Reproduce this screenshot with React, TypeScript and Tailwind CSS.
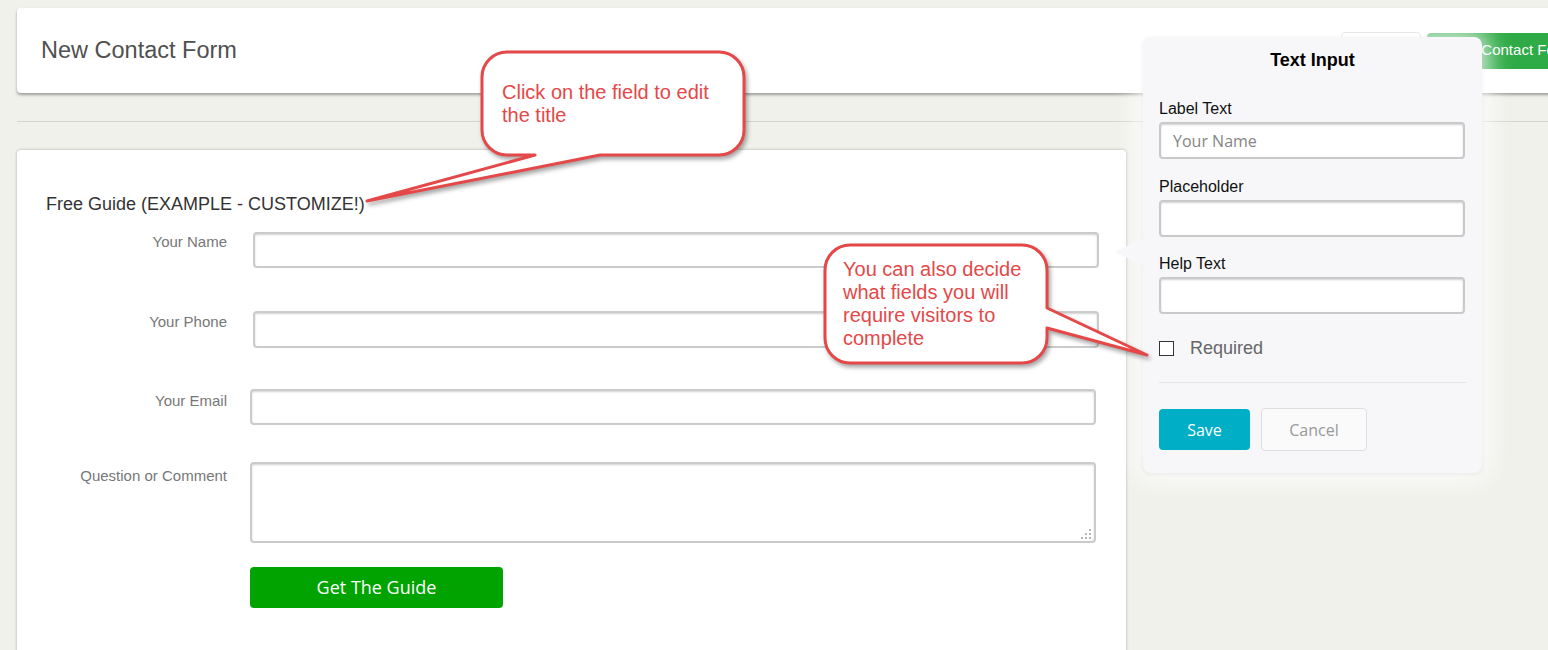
import React from 'react';

const rows = [
  { label: 'Your Name', mt: 'mt-[17px]', ml: 'ml-[26px]', h: 'h-[36px]', pt: 'pt-[1px]' },
  { label: 'Your Phone', mt: 'mt-[43px]', ml: 'ml-[26px]', h: 'h-[37px]', pt: 'pt-[2px]' },
  { label: 'Your Email', mt: 'mt-[41px]', ml: 'ml-[23px]', h: 'h-[36px]', pt: 'pt-[3px]' },
];

const inputCls =
  'w-[846px] rounded-[4px] border-2 border-[#cbcbcb] bg-white shadow-[inset_0_1px_2px_rgba(0,0,0,0.18)] outline-none';

const popInputCls =
  'w-[306px] h-[37px] rounded-[4px] border-2 border-[#c9c9c9] bg-white px-[12px] text-[16px] text-[#777] shadow-[inset_0_1px_2px_rgba(0,0,0,0.18)] outline-none placeholder:text-[#858585]';

const App: React.FC = () => {
  return (
    <div className="relative w-[1548px] h-[650px] overflow-hidden bg-[#f1f1ec] font-['Liberation_Sans',Arial,sans-serif]">
      <div className="pt-[8px] pl-[17px]">
        {/* Header */}
        <div className="flex items-center w-[1560px] h-[85px] rounded-[4px] bg-white shadow-[0_2px_3px_rgba(0,0,0,0.35)]">
          <h1 className="pl-[24px] text-[23.5px] text-[#505050]">New Contact Form</h1>
          <div className="ml-auto flex items-center gap-[6px]">
            <button className="w-[80px] h-[37px] rounded-[4px] border border-[#cfcfcf] bg-white"></button>
            <button className="w-[150px] h-[36px] rounded-l-[4px] bg-[#2eaa46] pl-[16px] text-left text-[15px] text-white whitespace-nowrap">
              Save Contact Form
            </button>
          </div>
        </div>

        <div className="mt-[28px] h-px w-full bg-[#d5d5cf]"></div>

        {/* Form card */}
        <div className="mt-[28px] w-[1109px] h-[520px] rounded-[4px] bg-white pt-[43px] pl-[29px] shadow-[0_0_3px_rgba(0,0,0,0.3)]">
          <h2 className="text-[18px] leading-[22px] text-[#333]">Free Guide (EXAMPLE - CUSTOMIZE!)</h2>

          {rows.map((row) => (
            <div key={row.label} className={`flex ${row.mt}`}>
              <label className={`w-[181px] text-right text-[15px] leading-[18px] text-[#777] ${row.pt}`}>
                {row.label}
              </label>
              <input className={`${inputCls} ${row.h} ${row.ml}`} />
            </div>
          ))}

          <div className="flex mt-[37px]">
            <label className="w-[181px] pt-[5px] text-right text-[15px] leading-[18px] text-[#777]">
              Question or Comment
            </label>
            <div className="relative ml-[23px]">
              <textarea className={`${inputCls} h-[81px] resize-none block`} />
              <svg className="absolute right-[4px] bottom-[3px]" width="12" height="12" viewBox="0 0 12 12">
                <rect x="9" y="1" width="2" height="2" fill="#b5b5b5" />
                <rect x="5" y="5" width="2" height="2" fill="#b5b5b5" />
                <rect x="9" y="5" width="2" height="2" fill="#b5b5b5" />
                <rect x="1" y="9" width="2" height="2" fill="#b5b5b5" />
                <rect x="5" y="9" width="2" height="2" fill="#b5b5b5" />
                <rect x="9" y="9" width="2" height="2" fill="#b5b5b5" />
              </svg>
            </div>
          </div>

          <div className="flex mt-[24px]">
            <div className="w-[181px]"></div>
            <button className="ml-[23px] w-[253px] h-[41px] rounded-[4px] bg-[#00a300] font-['Open_Sans',sans-serif] text-[18px] text-white">
              Get The Guide
            </button>
          </div>
        </div>
      </div>

      {/* Field settings popover */}
      <div className="absolute left-[1143px] top-[37px] w-[339px] h-[436px] rounded-[8px] bg-[#f7f7f9] px-[16px] pt-[11px] shadow-[0_0_24px_6px_rgba(255,255,255,0.85),0_1px_4px_rgba(0,0,0,0.14)]">
        <div className="absolute -left-[28px] top-[201px] w-0 h-0 border-y-[14px] border-y-transparent border-r-[28px] border-r-[#f7f7f9]"></div>
        <div className="text-center text-[18px] leading-[24px] font-bold text-black">Text Input</div>

        <div className="mt-[27px] mb-[3px] text-[16px] leading-[20px] text-[#111]">Label Text</div>
        <input className={`${popInputCls} font-['Open_Sans',sans-serif]`} placeholder="Your Name" />

        <div className="mt-[18px] mb-[3px] text-[16px] leading-[20px] text-[#111]">Placeholder</div>
        <input className={popInputCls} />

        <div className="mt-[17px] mb-[3px] text-[16px] leading-[20px] text-[#111]">Help Text</div>
        <input className={popInputCls} />

        <div className="mt-[23px] flex items-center h-[22px]">
          <span className="block w-[15px] h-[15px] border-[1.5px] border-[#333] bg-white"></span>
          <span className="ml-[16px] text-[18px] text-[#666]">Required</span>
        </div>

        <div className="mt-[23px] h-px w-[307px] bg-[#e4e4e6]"></div>

        <div className="mt-[25px] flex items-center gap-[11px]">
          <button className="w-[91px] h-[41px] rounded-[4px] bg-[#00aec6] font-['Open_Sans',sans-serif] text-[16px] text-white">
            Save
          </button>
          <button className="w-[106px] h-[43px] rounded-[4px] border border-[#dedede] bg-[#fafafb] font-['Open_Sans',sans-serif] text-[16px] text-[#999]">
            Cancel
          </button>
        </div>
      </div>

      {/* Callouts */}
      <svg
        className="absolute left-0 top-0 pointer-events-none drop-shadow-[2px_3px_2px_rgba(0,0,0,0.35)]"
        width="1548"
        height="650"
      >
        <path
          d="M507 52 H719 A25 25 0 0 1 744 77 V130 A25 25 0 0 1 719 155 H600 L367 201 L535 155 H507 A25 25 0 0 1 482 130 V77 A25 25 0 0 1 507 52 Z"
          fill="#fff"
          stroke="#e44848"
          strokeWidth="3"
          strokeLinejoin="round"
        />
        <path
          d="M850 245 H1022 A25 25 0 0 1 1047 270 V308 L1147 355 L1047 328 V338 A25 25 0 0 1 1022 363 H850 A25 25 0 0 1 825 338 V270 A25 25 0 0 1 850 245 Z"
          fill="#fff"
          stroke="#e44848"
          strokeWidth="3"
          strokeLinejoin="round"
        />
      </svg>
      <div className="absolute left-[502px] top-[81px] w-[230px] text-[20px] leading-[23px] text-[#e44848]">
        Click on the field to edit the title
      </div>
      <div className="absolute left-[843px] top-[258px] w-[195px] text-[20px] leading-[23px] text-[#e44848]">
        You can also decide what fields you will require visitors to complete
      </div>
    </div>
  );
};

export default App;
